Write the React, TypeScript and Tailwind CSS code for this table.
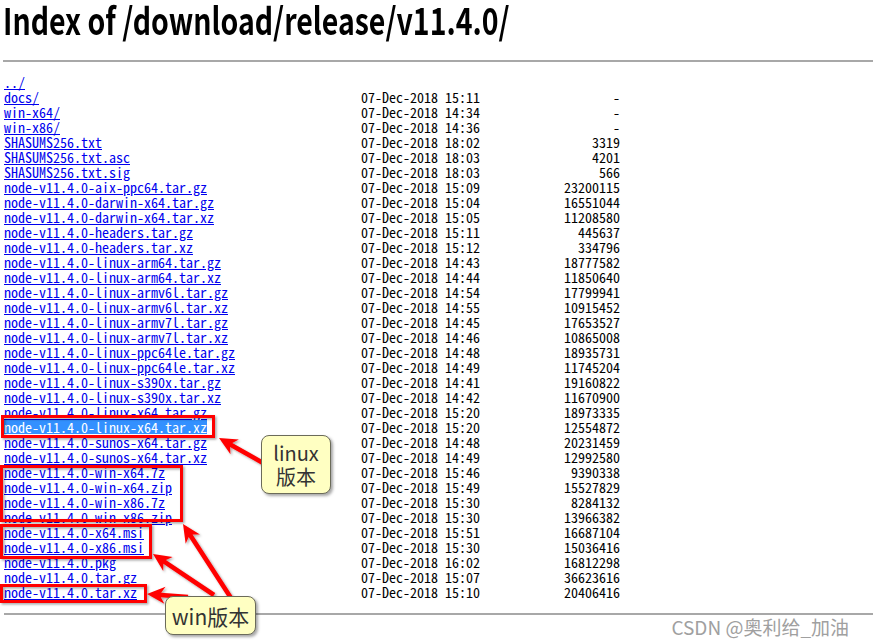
import React from "react";

const MONO = "font-['Noto_Sans_Mono_CJK_SC','Liberation_Mono',monospace]";

const rows: [string, string, string][] = [
  ["../", "", ""],
  ["docs/", "07-Dec-2018 15:11", "-"],
  ["win-x64/", "07-Dec-2018 14:34", "-"],
  ["win-x86/", "07-Dec-2018 14:36", "-"],
  ["SHASUMS256.txt", "07-Dec-2018 18:02", "3319"],
  ["SHASUMS256.txt.asc", "07-Dec-2018 18:03", "4201"],
  ["SHASUMS256.txt.sig", "07-Dec-2018 18:03", "566"],
  ["node-v11.4.0-aix-ppc64.tar.gz", "07-Dec-2018 15:09", "23200115"],
  ["node-v11.4.0-darwin-x64.tar.gz", "07-Dec-2018 15:04", "16551044"],
  ["node-v11.4.0-darwin-x64.tar.xz", "07-Dec-2018 15:05", "11208580"],
  ["node-v11.4.0-headers.tar.gz", "07-Dec-2018 15:11", "445637"],
  ["node-v11.4.0-headers.tar.xz", "07-Dec-2018 15:12", "334796"],
  ["node-v11.4.0-linux-arm64.tar.gz", "07-Dec-2018 14:43", "18777582"],
  ["node-v11.4.0-linux-arm64.tar.xz", "07-Dec-2018 14:44", "11850640"],
  ["node-v11.4.0-linux-armv6l.tar.gz", "07-Dec-2018 14:54", "17799941"],
  ["node-v11.4.0-linux-armv6l.tar.xz", "07-Dec-2018 14:55", "10915452"],
  ["node-v11.4.0-linux-armv7l.tar.gz", "07-Dec-2018 14:45", "17653527"],
  ["node-v11.4.0-linux-armv7l.tar.xz", "07-Dec-2018 14:46", "10865008"],
  ["node-v11.4.0-linux-ppc64le.tar.gz", "07-Dec-2018 14:48", "18935731"],
  ["node-v11.4.0-linux-ppc64le.tar.xz", "07-Dec-2018 14:49", "11745204"],
  ["node-v11.4.0-linux-s390x.tar.gz", "07-Dec-2018 14:41", "19160822"],
  ["node-v11.4.0-linux-s390x.tar.xz", "07-Dec-2018 14:42", "11670900"],
  ["node-v11.4.0-linux-x64.tar.gz", "07-Dec-2018 15:20", "18973335"],
  ["node-v11.4.0-linux-x64.tar.xz", "07-Dec-2018 15:20", "12554872"],
  ["node-v11.4.0-sunos-x64.tar.gz", "07-Dec-2018 14:48", "20231459"],
  ["node-v11.4.0-sunos-x64.tar.xz", "07-Dec-2018 14:49", "12992580"],
  ["node-v11.4.0-win-x64.7z", "07-Dec-2018 15:46", "9390338"],
  ["node-v11.4.0-win-x64.zip", "07-Dec-2018 15:49", "15527829"],
  ["node-v11.4.0-win-x86.7z", "07-Dec-2018 15:30", "8284132"],
  ["node-v11.4.0-win-x86.zip", "07-Dec-2018 15:30", "13966382"],
  ["node-v11.4.0-x64.msi", "07-Dec-2018 15:51", "16687104"],
  ["node-v11.4.0-x86.msi", "07-Dec-2018 15:30", "15036416"],
  ["node-v11.4.0.pkg", "07-Dec-2018 16:02", "16812298"],
  ["node-v11.4.0.tar.gz", "07-Dec-2018 15:07", "36623616"],
  ["node-v11.4.0.tar.xz", "07-Dec-2018 15:10", "20406416"],
];

const SELECTED = "node-v11.4.0-linux-x64.tar.xz";

// arrow as a filled polygon, tail -> tip
function arrowPoints(x1: number, y1: number, x2: number, y2: number) {
  const dx = x2 - x1;
  const dy = y2 - y1;
  const len = Math.hypot(dx, dy);
  const ux = dx / len;
  const uy = dy / len;
  const nx = -uy;
  const ny = ux;
  const head = 18;
  const hw = 8.5;
  const sw = 2.3;
  const bx = x2 - ux * head;
  const by = y2 - uy * head;
  const notch = 4;
  const cx = bx + ux * notch;
  const cy = by + uy * notch;
  const pts = [
    [x1 + nx * sw, y1 + ny * sw],
    [cx + nx * sw, cy + ny * sw],
    [bx + nx * hw, by + ny * hw],
    [x2, y2],
    [bx - nx * hw, by - ny * hw],
    [cx - nx * sw, cy - ny * sw],
    [x1 - nx * sw, y1 - ny * sw],
  ];
  return pts.map((p) => p.join(",")).join(" ");
}

const arrows = [
  [263, 463, 219, 438],
  [231, 598, 183, 524],
  [214, 595, 153, 554],
  [188, 597, 147, 594],
];

function Annotations() {
  return (
    <svg
      className="absolute left-0 top-0 pointer-events-none"
      width={873}
      height={644}
      viewBox="0 0 873 644"
    >
      <defs>
        <filter id="sh" x="-20%" y="-20%" width="140%" height="140%">
          <feDropShadow dx="1.5" dy="1.5" stdDeviation="1" floodColor="#000" floodOpacity="0.35" />
        </filter>
      </defs>
      <g fill="none" stroke="#ff0000" strokeWidth={3} filter="url(#sh)">
        <rect x={2.5} y={416.5} width={211} height={20} />
        <rect x={1.5} y={466.5} width={180} height={54} />
        <rect x={1.5} y={525.5} width={149} height={32} />
        <rect x={1.5} y={585.5} width={144} height={16} />
      </g>
      <g fill="#ff0000" filter="url(#sh)">
        {arrows.map((a, i) => (
          <polygon key={i} points={arrowPoints(a[0], a[1], a[2], a[3])} />
        ))}
      </g>
    </svg>
  );
}

function Callout({ className, children }: { className: string; children: React.ReactNode }) {
  return (
    <div
      className={`absolute flex flex-col items-center justify-center rounded-[8px] border border-[#6b6b5a] bg-[#ffffc2] text-[#333] text-[20px] leading-[24px] font-['Noto_Sans_CJK_SC',sans-serif] shadow-[2px_2px_3px_rgba(0,0,0,0.35)] ${className}`}
    >
      {children}
    </div>
  );
}

export default function App() {
  return (
    <div className="relative w-[873px] h-[644px] overflow-hidden bg-white text-black">
      <div className="h-[60px] pl-[3px]">
        <h1 className="w-max origin-left scale-x-[0.77] text-[37px] leading-[38px] font-bold font-['Noto_Sans_CJK_SC',sans-serif]">
          Index of /download/release/v11.4.0/
        </h1>
      </div>
      <div className="ml-[3px] h-[2px] bg-[#a8a8a8]" />
      <div className={`mt-[13px] pl-[4px] ${MONO} text-[14px] leading-[15px]`}>
        {rows.map(([name, date, size]) => (
          <div key={name} className="flex h-[15px] items-center whitespace-pre">
            <div className="w-[357px] h-[15px]">
              <a
                href="#"
                className={
                  name === SELECTED
                    ? "inline-block h-[15px] leading-[15px] bg-[#3390ff] text-white underline"
                    : "inline-block h-[15px] leading-[15px] text-[#0000ee] underline"
                }
              >
                {name}
              </a>
            </div>
            <div className="w-[119px] h-[15px]">{date}</div>
            <div className="w-[140px] h-[15px] text-right">{size}</div>
          </div>
        ))}
      </div>
      <div className="mt-[13px] ml-[4px] h-[2px] bg-[#a8a8a8]" />
      <div className="flex justify-end pr-[24px] pt-[1px]">
        <span className="text-[19px] leading-[22px] text-[#a0a0a0] font-['Noto_Sans_CJK_SC',sans-serif]">
          CSDN @奥利给_加油
        </span>
      </div>

      <Annotations />
      <Callout className="left-[261px] top-[435px] w-[70px] h-[59px]">
        <span>linux</span>
        <span>版本</span>
      </Callout>
      <Callout className="left-[165px] top-[596px] w-[91px] h-[39px]">
        <span className="text-[21px]">win版本</span>
      </Callout>
    </div>
  );
}
